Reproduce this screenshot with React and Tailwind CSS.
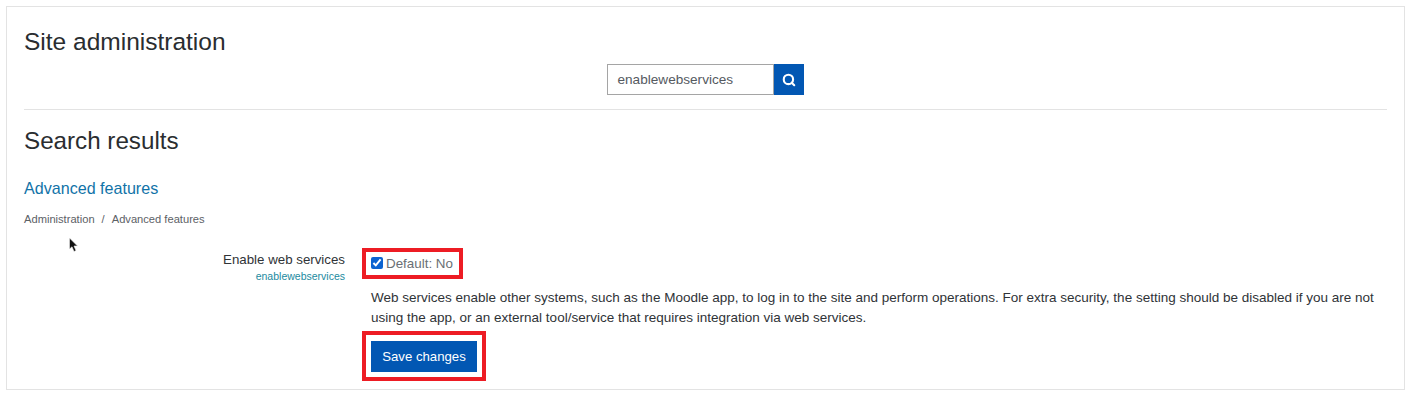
import { Search } from "lucide-react";

export default function App() {
  return (
    <div className="h-[400px] w-[1413px] bg-white pl-[6px] pt-[6px] font-['Liberation_Sans',Arial,sans-serif] text-[#2b2f33]">
      <div className="relative h-[384px] w-[1399px] border border-[#e3e3e3] pl-[17px] pr-[18px] pt-[18px]">
        <h1 className="h-[34px] text-[24.5px] leading-[34px] font-normal text-[#2a2d30]">Site administration</h1>
        <div className="mt-[5px] flex justify-center">
          <div className="flex h-[31px] w-[197px]">
            <div className="flex h-full flex-1 items-center border border-[#a5a5a5] pl-[10px] pt-[1px] text-[13.6px] text-[#555a5f]">enablewebservices</div>
            <div className="flex h-full w-[30px] items-center justify-center bg-[#0257b3]">
              <Search className="h-[14px] w-[14px] text-white" strokeWidth={3.6} />
            </div>
          </div>
        </div>
        <div className="mt-[14px] h-px w-[1363px] bg-[#e3e3e3]" />
        <h2 className="mt-[16px] h-[30px] text-[24.2px] leading-[30px] font-normal text-[#2a2d30]">Search results</h2>
        <a className="mt-[22px] block h-[20px] text-[16.1px] leading-[20px] text-[#1173a8]">Advanced features</a>
        <div className="mt-[13px] flex h-[16px] items-center text-[11.15px] leading-[16px] text-[#5c6166]">
          <span>Administration</span>
          <span className="mx-[7px]">/</span>
          <span>Advanced features</span>
        </div>
        <div className="mt-[21px] flex">
          <div className="flex w-[321px] shrink-0 flex-col items-end pt-[3px]">
            <div className="text-[13.3px] leading-[18px] text-[#2f3337]">Enable web services</div>
            <div className="text-[10.5px] leading-[14px] text-[#1b8aa0]">enablewebservices</div>
          </div>
          <div className="ml-[17px] flex-1">
            <div className="flex h-[31px] w-[101px] items-center border-[4px] border-[#ed1c24] pl-[5px]">
              <input type="checkbox" defaultChecked className="m-0 -mt-[2px] h-[12px] w-[12px] accent-[#0b63d1]" />
              <span className="ml-[3px] text-[13.4px] leading-[18px] text-[#6a6f74]">Default: No</span>
            </div>
            <p className="mt-[9px] ml-[9px] w-[1012px] text-[13.5px] leading-[20px] text-[#2f3337]">
              Web services enable other systems, such as the Moodle app, to log in to the site and perform operations. For extra security, the setting should be disabled if you are not using the app, or an external tool/service that requires integration via web services.
            </p>
            <div className="mt-[3px] flex h-[50px] w-[124px] items-center justify-center border-[4px] border-[#ed1c24]">
              <button className="h-[31px] w-[106px] bg-[#0257b3] pt-[2px] text-[13.2px] text-white">Save changes</button>
            </div>
          </div>
        </div>
        <svg className="absolute left-[61px] top-[230px]" width="12" height="17" viewBox="0 0 12 17">
          <path d="M1.5 1 L1.5 12 L4 9.8 L6 14.5 L8 13.6 L6 9 L9.5 9 Z" fill="#111" stroke="#eee" strokeWidth="0.6" />
        </svg>
      </div>
    </div>
  );
}
